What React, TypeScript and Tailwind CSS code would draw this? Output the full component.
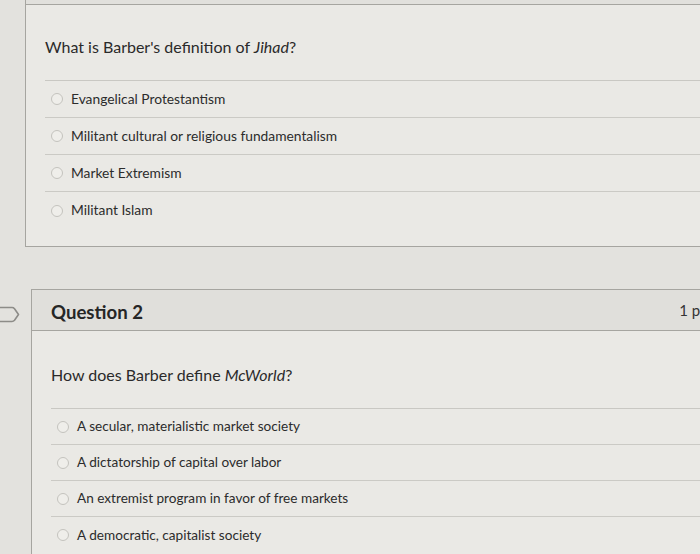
import { FC } from "react";

interface QuestionProps {
  prompt: React.ReactNode;
  options: string[];
}

const Radio: FC = () => (
  <span className="inline-block w-[12px] h-[12px] rounded-full border border-[#c4c3be] bg-[#efeeea] shrink-0" />
);

const Options: FC<{ options: string[]; row: string; size: string }> = ({
  options,
  row,
  size,
}) => (
  <div className="border-t border-[#c9c8c3]">
    {options.map((opt, i) => (
      <div
        key={opt}
        className={
          "flex items-center pl-[6px] gap-[8px] " +
          row +
          (i < options.length - 1 ? " border-b border-[#cbcac5]" : "")
        }
      >
        <Radio />
        <span className={"text-[#2c2c2c] " + size}>{opt}</span>
      </div>
    ))}
  </div>
);

const QuestionBody: FC<
  QuestionProps & { top: string; row: string; size: string }
> = ({ prompt, options, top, row, size }) => (
  <div className={"pl-[19px] pb-[17px] " + top}>
    <p className="text-[16px] leading-[20px] text-[#2a2a2a] mb-[23px]">
      {prompt}
    </p>
    <Options options={options} row={row} size={size} />
  </div>
);

const FlagIcon: FC = () => (
  <svg width="20" height="17" viewBox="0 0 20 17" fill="none">
    <path
      d="M-1 1.5 H12 Q13.5 1.5 14.5 2.7 L18.5 8.5 L14.5 14.3 Q13.5 15.5 12 15.5 H-1"
      stroke="#8d8c88"
      strokeWidth="1.6"
      strokeLinejoin="round"
    />
  </svg>
);

export default function App() {
  return (
    <div className="w-[700px] h-[554px] overflow-hidden bg-[#e3e2de] font-['Lato','Liberation_Sans',sans-serif]">
      <div className="ml-[25px] w-[720px] border-l border-b border-[#a6a5a0] bg-[#eae9e5]">
        <div className="h-[5px] border-b border-[#a6a5a0] bg-[#e1e0dc]" />
        <QuestionBody
          top="pt-[32px]"
          row="h-[37px]"
          size="text-[13.8px]"
          prompt={
            <>
              What is Barber's definition of <i>Jihad</i>?
            </>
          }
          options={[
            "Evangelical Protestantism",
            "Militant cultural or religious fundamentalism",
            "Market Extremism",
            "Militant Islam",
          ]}
        />
      </div>

      <div className="flex items-start mt-[42px]">
        <div className="w-[31px] pt-[17px] shrink-0">
          <FlagIcon />
        </div>
        <div className="w-[700px] shrink-0 border-l border-t border-[#a6a5a0] bg-[#eae9e5]">
          <div className="h-[41px] flex items-center justify-between pl-[19px] pr-[19px] pt-[6px] border-b border-[#a6a5a0] bg-[#e0dfdb]">
            <span className="text-[18.6px] font-bold text-[#262626]">
              Question 2
            </span>
            <span className="text-[15px] text-[#333] -mt-[6px]">1 pts</span>
          </div>
          <QuestionBody
            top="pt-[34px]"
            row="h-[36px]"
            size="text-[13.6px]"
            prompt={
              <>
                How does Barber define <i>McWorld</i>?
              </>
            }
            options={[
              "A secular, materialistic market society",
              "A dictatorship of capital over labor",
              "An extremist program in favor of free markets",
              "A democratic, capitalist society",
            ]}
          />
        </div>
      </div>
    </div>
  );
}
